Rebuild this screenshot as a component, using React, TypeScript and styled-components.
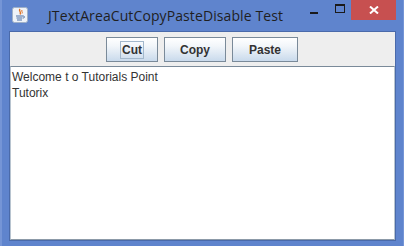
import styled, { createGlobalStyle } from "styled-components"

const GlobalStyle = createGlobalStyle`
    html, body {
        margin: 0;
        padding: 0;
        background: #5f84cd;
    }
    #root {
        width: 404px;
        height: 246px;
    }
`

const JavaIcon = () => (
    <svg width="16" height="16" viewBox="0 0 16 16">
        <rect x="0.5" y="0.5" width="15" height="15" rx="2" fill="#eef2f8" stroke="#9fb0c8" />
        <path d="M8 2 C6 4 10 5 8 7.5" stroke="#e07020" strokeWidth="1.4" fill="none" />
        <path d="M10 3 C9 4.5 11 5 10 6.5" stroke="#e07020" strokeWidth="1" fill="none" />
        <path d="M4 9 H11 M4.5 11 H10.5 M5 13 H10" stroke="#4a6fa5" strokeWidth="1" />
        <path d="M11 9 C13 9 13 11 11 11" stroke="#4a6fa5" strokeWidth="1" fill="none" />
    </svg>
)

const App = () => {
    return (
        <Frame>
            <GlobalStyle />
            <TitleBar>
                <IconSlot><JavaIcon /></IconSlot>
                <Title>JTextAreaCutCopyPasteDisable Test</Title>
                <Controls>
                    <CtrlButton><MinGlyph /></CtrlButton>
                    <CtrlButton><MaxGlyph /></CtrlButton>
                    <CloseButton>
                        <svg width="10" height="8" viewBox="0 0 10 8">
                            <path d="M1 0.5 L9 7.5 M9 0.5 L1 7.5" stroke="#fff" strokeWidth="2" />
                        </svg>
                    </CloseButton>
                </Controls>
            </TitleBar>
            <Client>
                <ButtonRow>
                    <PushButton $w={52} $focused>
                        <span>Cut</span>
                    </PushButton>
                    <PushButton $w={62}>
                        <span>Copy</span>
                    </PushButton>
                    <PushButton $w={66}>
                        <span>Paste</span>
                    </PushButton>
                </ButtonRow>
                <TextArea>
                    <div>Welcome t o Tutorials Point</div>
                    <div>Tutorix</div>
                </TextArea>
            </Client>
        </Frame>
    )
}

const Frame = styled.div`
    width: 404px;
    height: 246px;
    box-sizing: border-box;
    background: #5f84cd;
    border-left: 2px solid #7595d6;
    border-right: 1px solid #7595d6;
    display: flex;
    flex-direction: column;
    font-family: "Liberation Sans", Arial, sans-serif;
`

const TitleBar = styled.div`
    height: 31px;
    display: flex;
    align-items: flex-start;
`

const IconSlot = styled.div`
    width: 16px;
    height: 16px;
    margin: 7px 0 0 10px;
`

const Title = styled.div`
    margin: 9px 0 0 20px;
    font-family: "Segoe UI", "Open Sans", "Liberation Sans", sans-serif;
    font-size: 14px;
    line-height: 14px;
    letter-spacing: 0.1px;
    color: #1f1f1f;
    flex: 1;
    white-space: nowrap;
`

const Controls = styled.div`
    display: flex;
    align-items: flex-start;
    margin-right: 7px;
`

const CtrlButton = styled.div`
    width: 26px;
    height: 20px;
    display: flex;
    align-items: center;
    justify-content: center;
`

const MinGlyph = styled.div`
    width: 8px;
    height: 2px;
    margin-top: 6px;
    background: #1a1a1a;
`

const MaxGlyph = styled.div`
    width: 8px;
    height: 6px;
    border: 1px solid #1a1a1a;
    border-top-width: 2px;
    margin-top: -3px;
`

const CloseButton = styled.div`
    width: 45px;
    height: 20px;
    background: #c75050;
    display: flex;
    align-items: center;
    justify-content: center;
    margin-left: -2px;
`

const Client = styled.div`
    flex: 1;
    margin: 0 7px 5px 7px;
    background: #eeeeee;
    border: 1px solid #4a6aaa;
    display: flex;
    flex-direction: column;
`

const ButtonRow = styled.div`
    display: flex;
    justify-content: center;
    gap: 6px;
    padding: 5px 0 4px;
    padding-right: 1px;
`

const PushButton = styled.div<{ $w: number; $focused?: boolean }>`
    width: ${(p) => p.$w}px;
    height: 25px;
    box-sizing: border-box;
    border: 1px solid #7a8a99;
    background: linear-gradient(#ffffff 0%, #f2f6fa 35%, #c9daec 100%);
    display: flex;
    align-items: center;
    justify-content: center;
    font-size: 12px;
    font-weight: bold;
    color: #333333;

    span {
        padding: 1px 1px;
        border: 1px solid ${(p) => (p.$focused ? "#a3b8cc" : "transparent")};
        line-height: 14px;
    }
`

const TextArea = styled.div`
    flex: 1;
    background: #ffffff;
    border-top: 1px solid #7a8a99;
    border-left: 1px solid #b8c4d0;
    border-right: 1px solid #b8c4d0;
    border-bottom: 1px solid #8c9aa8;
    padding: 2px 1px;
    font-size: 12px;
    line-height: 16px;
    color: #333333;
`

export default App
